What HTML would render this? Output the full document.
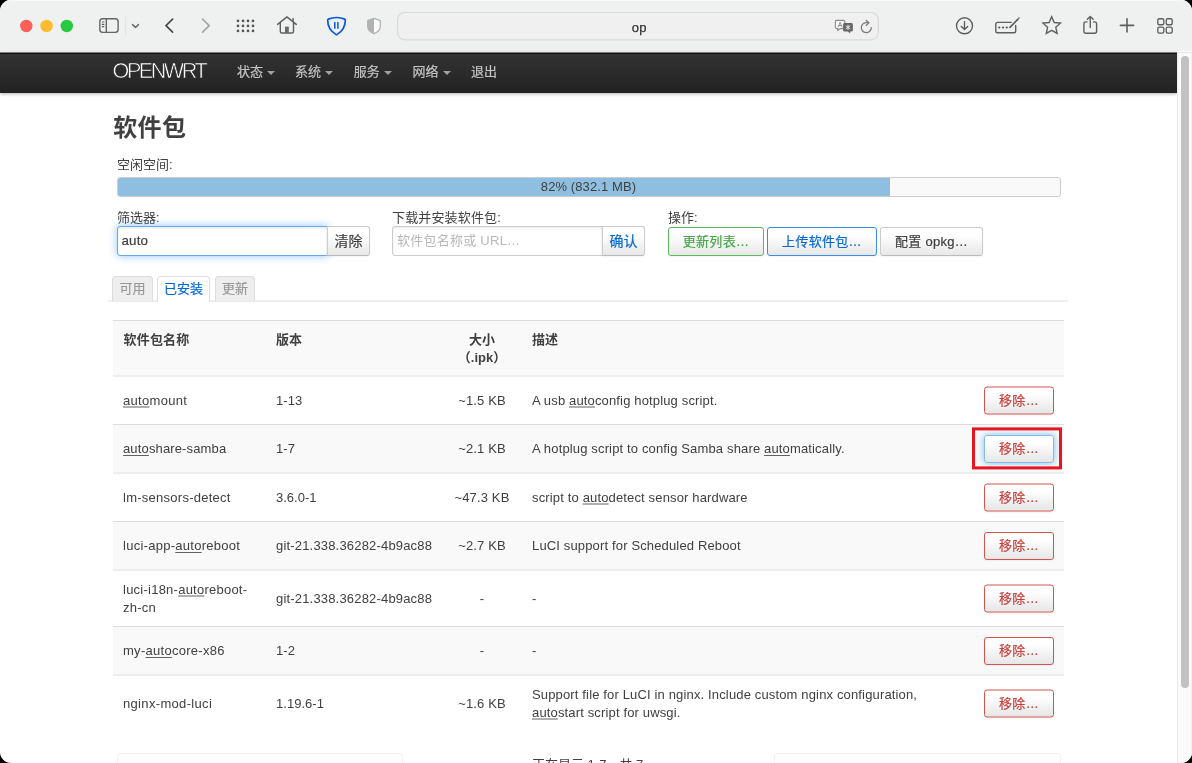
<!DOCTYPE html>
<html lang="zh-CN">
<head>
<meta charset="utf-8">
<title>OpenWrt - 软件包 - LuCI</title>
<style>
*{box-sizing:border-box;margin:0;padding:0}
html,body{width:1192px;height:763px;overflow:hidden;background:#000}
body{font-family:"Liberation Sans","Noto Sans CJK SC",sans-serif;font-size:13px;line-height:18px;color:#404040;position:relative}
#win{will-change:transform;position:absolute;left:0;top:0;width:1192px;height:763px;background:#fff;border-radius:11px;overflow:hidden}
.abs{position:absolute}
/* safari toolbar */
#tb{position:absolute;left:0;top:0;width:1192px;height:52px;background:#eff1f0;border-bottom:1px solid #fafafa}
#tb svg{position:absolute;overflow:visible}
.tl{position:absolute;top:19.8px;width:12.4px;height:12.4px;border-radius:50%}
#url{display:none}
#urltxt{position:absolute;left:398.3px;top:19px;width:482px;text-align:center;font-size:13px;line-height:18px;color:#333;letter-spacing:.4px;-webkit-text-stroke:.25px #333}
/* navbar */
#nav{position:absolute;left:0;top:52px;width:1177px;height:41px;background:linear-gradient(#343434,#222);box-shadow:0 1px 3px rgba(0,0,0,.3)}
#brand{position:absolute;left:112.6px;top:9px;font-size:21.6px;line-height:20px;color:#fff;font-weight:normal;letter-spacing:-2.5px;-webkit-text-stroke:0.6px #2c2c2c}
.mi{position:absolute;top:11px;font-size:13px;line-height:18px;color:#c4c4c4;-webkit-text-stroke:.2px #c4c4c4;white-space:nowrap}
.mi i{display:inline-block;width:0;height:0;border-left:4px solid transparent;border-right:4px solid transparent;border-top:4px solid #a0a0a0;vertical-align:1.3px;margin-left:4px}
/* scrollbar */
#sb{position:absolute;left:1177px;top:52px;width:15px;height:711px;background:#fafafa;border-left:1px solid #e9e9e9;border-top:1px solid #e6e8e6;border-right:1px solid #f0f0f0}
#sbt{position:absolute;left:3px;top:2.5px;width:8px;height:632.4px;border-radius:4px;background:#c2c2c2}
/* content */
h2{position:absolute;left:113.3px;top:113px;letter-spacing:.3px;font-size:24px;line-height:30px;font-weight:bold;color:#404040}
.lbl{position:absolute;font-size:13px;line-height:18px;color:#404040;white-space:nowrap}
#pg{position:absolute;left:117px;top:177px;width:944px;height:20px;border:1px solid #ccc;border-radius:3px;background:#f9f9f9;overflow:hidden}
#pg b{position:absolute;left:0;top:0;height:100%;width:82%;background:#8fbfe0;font-weight:normal}
#pg span{position:absolute;left:-.5px;top:0;width:100%;text-align:center;line-height:18px;font-size:13px;color:#404040;letter-spacing:.1px}
.inp{position:absolute;top:226px;height:30px;border:1px solid #ccc;background:#fff;box-shadow:inset 0 1px 3px rgba(0,0,0,.1);border-radius:3px 0 0 3px;font-size:13px;line-height:28px;padding-left:4px;color:#404040;white-space:nowrap}
.btn{position:absolute;top:226px;height:30px;border:1px solid #ccc;border-bottom-color:#bbb;border-radius:3px;background:linear-gradient(#fff,#fff 25%,#e8e8e8);font-size:13px;letter-spacing:.3px;-webkit-text-stroke:.2px;line-height:28px;text-align:center;color:#404040;white-space:nowrap;box-shadow:inset 0 1px 0 rgba(255,255,255,.2),0 1px 2px rgba(0,0,0,.05)}
.btn.a{top:227px;height:29px;line-height:27px}
.tab{position:absolute;top:276px;height:25px;border:1px solid #ddd;border-bottom:none;border-radius:4px 4px 0 0;background:#eee;color:#999;font-size:13px;line-height:24px;-webkit-text-stroke:.2px;text-align:center}
#tabline{position:absolute;left:108px;top:300px;width:960px;height:1px;background:#ddd;transform:translateY(.6px)}
/* table */
#tblhead{position:absolute;left:113px;top:320px;width:951px;height:56px;background:#f9f9f9;border-top:1px solid #ddd}
.row{position:absolute;left:113px;width:951px;border-top:1px solid #ddd}
.row.h{transform:translateY(.5px)}
.row.odd{background:#fff}
.row.even{background:#f9f9f9}
.c{position:absolute;font-size:13px;line-height:18px;color:#404040;white-space:nowrap}
.c{letter-spacing:.15px}
.c u{text-decoration:underline;text-decoration-thickness:1px;text-decoration-color:#606060;text-underline-offset:2px}
.th{position:absolute;font-size:13px;line-height:18px;font-weight:bold;color:#404040;white-space:nowrap}
.rm.f{border-color:#85b9ec;box-shadow:0 0 7px rgba(82,168,236,.75)}
.hlbox{left:859px;width:90px;height:42px;border:3px solid #e8141f;transform:translateY(.4px)}
.rm{position:absolute;left:871px;width:70px;height:28px;border:1px solid #d25450;border-radius:3px;background:linear-gradient(#fff,#fff 25%,#e6e6e6);color:#c9403c;font-size:13px;letter-spacing:.35px;-webkit-text-stroke:.2px;line-height:26px;text-align:center;box-shadow:0 1px 2px rgba(0,0,0,.05)}
</style>
</head>
<body>
<div id="win">

<div id="tb">
  <div class="abs" style="left:0;top:0;width:100%;height:1px;background:#f7f8f7"></div>
  <div id="url"></div>
  <svg id="tbi" width="1192" height="52" viewBox="0 0 1192 52" style="left:0;top:0" fill="none" stroke="#5e5e5e" stroke-width="1.4" stroke-linecap="round" stroke-linejoin="round">
  <rect x="397.6" y="12.5" width="480.8" height="27.3" rx="7.5" fill="#eff0ef" stroke="#d9d9d9" stroke-width="1.2"/>
  <g stroke="none"><circle cx="26.3" cy="26" r="6.2" fill="#fe5f57"/><circle cx="46.6" cy="26" r="6.2" fill="#febc2e"/><circle cx="66.8" cy="26" r="6.2" fill="#28c840"/></g>
  <!-- sidebar -->
  <rect x="99.8" y="18.8" width="18.3" height="13.6" rx="2.8" stroke-width="1.4" stroke="#666"/>
  <path d="M106.3 18.8V32.4" stroke-linecap="butt" stroke-width="1.4" stroke="#666"/>
  <path d="M102.3 22h1.6M102.3 24.4h1.6M102.3 26.6h1.6" stroke-width="1.1"/>
  <path d="M125.7 17v18" stroke="#dfdfe2" stroke-width="1"/>
  <path d="M132.6 24.6l2.9 2.9l2.9-2.9" stroke="#6a6a6a" stroke-width="1.5"/>
  <!-- back / forward -->
  <path d="M172.6 19.1l-6.6 6.5l6.6 6.5" stroke="#4a4a4a" stroke-width="1.7"/>
  <path d="M202.6 19.1l6.6 6.5l-6.6 6.5" stroke="#a6a6a6" stroke-width="1.7"/>
  <!-- grid -->
  <g fill="#555" stroke="none">
    <circle cx="238" cy="20.9" r="1.35"/><circle cx="243" cy="20.9" r="1.35"/><circle cx="248" cy="20.9" r="1.35"/><circle cx="253" cy="20.9" r="1.35"/>
    <circle cx="238" cy="25.9" r="1.35"/><circle cx="243" cy="25.9" r="1.35"/><circle cx="248" cy="25.9" r="1.35"/><circle cx="253" cy="25.9" r="1.35"/>
    <circle cx="238" cy="30.9" r="1.35"/><circle cx="243" cy="30.9" r="1.35"/><circle cx="248" cy="30.9" r="1.35"/><circle cx="253" cy="30.9" r="1.35"/>
  </g>
  <!-- home -->
  <path d="M277.6 24.4L286.9 16.9L296.3 24.4"/>
  <path d="M280.3 23v8.4q0 1.6 1.6 1.6h10q1.6 0 1.6-1.6V23"/>
  <path d="M293.1 18.4v3.2"/>
  <rect x="285" y="26.6" width="3.8" height="6.4" fill="#6a6a6a" stroke="none"/>
  <!-- blue shield -->
  <path d="M336.5 17.5C339.6 17.5 342.6 18.2 344.6 19.1Q345.3 19.4 345.3 20.2C345.3 26.5 341.8 31.5 337.2 34.4Q336.5 34.8 335.8 34.4C331.2 31.5 327.7 26.5 327.7 20.2Q327.7 19.4 328.4 19.1C330.4 18.2 333.4 17.5 336.5 17.5Z" stroke="#0a58e0" stroke-width="1.7"/>
  <path d="M334.800 22.400v5.800M337.900 22.400v5.800" stroke="#0a58e0" stroke-width="1.5"/>
  <!-- half shield -->
  <path d="M374 18.300l6.300 2.400v5.800c0 3.400 -2.600 5.600 -6.300 7.100c-3.700 -1.500 -6.300 -3.700 -6.300 -7.100v-5.800z" stroke="#b2b2b2" stroke-width="1.300" fill="#fbfbfb"/>
  <path d="M374 18.300v15.300c-3.700 -1.500 -6.300 -3.700 -6.300 -7.100v-5.800z" fill="#b2b2b2" stroke="none"/>
  <!-- translate -->
  <path d="M836.800 20.400h6.600q1.500 0 1.500 1.500v5.200q0 1.500 -1.500 1.500h-3.400l-2.200 2v-2h-1q-1.500 0 -1.500 -1.500v-5.200q0 -1.500 1.500 -1.500z" stroke="#8a8a8a" stroke-width="1.100" fill="#f6f6f6"/>
  <path d="M838.300 26.900l1.800 -4.600l1.800 4.600M838.900 25.500h2.400" stroke="#8a8a8a" stroke-width="0.900"/>
  <path d="M844.600 23.100h6.800q1.500 0 1.500 1.500v5.300q0 1.500 -1.500 1.500h-1.200v2l-2.400 -2h-3.200q-1.500 0 -1.500 -1.500v-5.300q0 -1.500 1.500 -1.500z" fill="#666" stroke="none"/>
  <path d="M848 25.200v4.400M846 26l4 2.800M850 26l-4 2.800" stroke="#f0f0f0" stroke-width="0.900"/>
  <!-- reload -->
  <path d="M871.300 27.600a5 5 0 1 1 -4 -4.900" stroke="#7c7c7c" stroke-width="1.300"/>
  <path d="M866.300 20.400l2.600 2.300l-2.600 2.500" stroke="#7c7c7c" stroke-width="1.300"/>
  <!-- download -->
  <circle cx="964.500" cy="25.800" r="8" />
  <path d="M964.500 21.800v7.600M961.300 26.400l3.200 3.200l3.200 -3.200"/>
  <!-- password edit -->
  <path d="M1011.300 22.400h-13.700q-1.800 0 -1.800 1.800v6.700q0 1.800 1.800 1.800h16.300q1.800 0 1.800 -1.800v-5.400"/>
  <g fill="#555" stroke="none"><circle cx="999.300" cy="27.500" r="1.100"/><circle cx="1003" cy="27.500" r="1.100"/><circle cx="1006.700" cy="27.500" r="1.100"/></g>
  <path d="M1010 27.400l8 -8.300" stroke-width="1.700"/>
  <circle cx="1019" cy="18" r="0.800" fill="#555" stroke="none"/>
  <!-- star -->
  <path d="M1051.700 16.800l2.550 5.700l6.200 .65l-4.650 4.200l1.300 6.100l-5.400 -3.100l-5.400 3.100l1.300 -6.100l-4.650 -4.200l6.200 -.65z" stroke-width="1.400" stroke-linejoin="miter"/>
  <!-- share -->
  <path d="M1087 21.900h-1.100q-2 0 -2 2v7.300q0 2 2 2h8.700q2 0 2 -2v-7.300q0 -2 -2 -2h-1.100"/>
  <path d="M1090.250 27.600V16.500M1087.300 19.300l2.950 -2.900l2.950 2.900"/>
  <!-- plus -->
  <path d="M1120.400 25.400h13.200M1127 18.900v13.100" stroke-width="1.600"/>
  <!-- tabs -->
  <rect x="1157.8" y="18.7" width="6" height="6" rx="1.5" stroke-width="1.35"/>
  <rect x="1166.2" y="18.7" width="6" height="6" rx="1.5" stroke-width="1.35"/>
  <rect x="1157.8" y="27.1" width="6" height="6" rx="1.5" stroke-width="1.35"/>
  <rect x="1166.2" y="27.1" width="6" height="6" rx="1.5" stroke-width="1.35"/>
  
</svg>
  <div id="urltxt">op</div>
</div>

<div id="nav">
  <div class="abs" style="left:0;top:0;width:100%;height:1px;background:#7d7d7d"></div><div class="abs" style="left:0;top:1px;width:100%;height:1px;background:#121212"></div>
  <div id="brand">OPENWRT</div>
  <div class="mi" style="left:237px">状态<i></i></div>
  <div class="mi" style="left:295px">系统<i></i></div>
  <div class="mi" style="left:353.7px">服务<i></i></div>
  <div class="mi" style="left:412.5px">网络<i></i></div>
  <div class="mi" style="left:471px">退出</div>
</div>

<div id="sb"><div id="sbt"></div></div>

<h2>软件包</h2>
<div class="lbl" style="left:117px;top:156px">空闲空间:</div>
<div id="pg"><b></b><span>82% (832.1 MB)</span></div>

<div class="lbl" style="left:117px;top:209px">筛选器:</div>
<div class="inp" id="f1" style="left:117px;width:211px;border-color:#66abee;box-shadow:inset 0 1px 3px rgba(0,0,0,.1),0 0 8px rgba(82,168,236,.65);font-size:13.4px;letter-spacing:.2px;padding-left:3.4px;-webkit-text-stroke:.2px #404040">auto</div>
<div class="btn" style="left:327px;width:43px;border-radius:0 3px 3px 0;font-size:14px;letter-spacing:0">清除</div>

<div class="lbl" style="left:392px;top:209px;letter-spacing:.15px">下载并安装软件包:</div>
<div class="inp" style="left:392px;width:211px;color:#b8b8b8;letter-spacing:.25px">软件包名称或 URL…</div>
<div class="btn" style="left:602px;width:43px;border-radius:0 3px 3px 0;color:#0069d6;font-size:14px;letter-spacing:0">确认</div>

<div class="lbl" style="left:668px;top:209px">操作:</div>
<div class="btn a" style="left:668px;width:96px;border-color:#5cb85c;color:#46a546">更新列表…</div>
<div class="btn a" style="left:767px;width:110px;border-color:#3c8ce0;color:#0069d6">上传软件包…</div>
<div class="btn a" style="left:880px;width:103px">配置 opkg…</div>

<div id="tabline"></div>
<div class="tab" style="left:112px;width:41px">可用</div>
<div class="tab" style="left:157px;width:53px;background:#fff;color:#0069d6">已安装</div>
<div class="abs" style="left:158px;top:300px;width:51px;height:2px;background:#fff"></div>
<div class="tab" style="left:215px;width:40px">更新</div>

<!--ROWS-->
<div id="tblhead">
  <div class="th" style="left:10.5px;top:10px;letter-spacing:.2px">软件包名称</div>
  <div class="th" style="left:163px;top:10px">版本</div>
  <div class="th" style="left:329px;top:10px;width:80px;text-align:center">大小<br>（.ipk）</div>
  <div class="th" style="left:419px;top:10px">描述</div>
</div>
<div class="row odd h" style="top:375px;height:48.5px">
  <div class="c" style="left:10px;top:14.75px;letter-spacing:0.3px"><u>auto</u>mount</div>
  <div class="c" style="left:163px;top:14.75px;letter-spacing:0.05px">1-13</div>
  <div class="c" style="left:329px;top:14.75px;width:80px;text-align:center">~1.5 KB</div>
  <div class="c" style="left:419px;top:14.75px">A usb <u>auto</u>config hotplug script.</div>
  <div class="rm" style="top:9.75px">移除…</div>
</div>
<div class="row even" style="top:424px;height:48.5px">
  <div class="c" style="left:10px;top:14.75px;letter-spacing:0.14px"><u>auto</u>share-samba</div>
  <div class="c" style="left:163px;top:14.75px;letter-spacing:0.05px">1-7</div>
  <div class="c" style="left:329px;top:14.75px;width:80px;text-align:center">~2.1 KB</div>
  <div class="c" style="left:419px;top:14.75px">A hotplug script to config Samba share <u>auto</u>matically.</div>
  <div class="rm f" style="top:9.75px">移除…</div>
  <div class="abs hlbox" style="top:2px"></div>
</div>
<div class="row odd h" style="top:472px;height:48.5px">
  <div class="c" style="left:10px;top:14.75px;letter-spacing:0.26px">lm-sensors-detect</div>
  <div class="c" style="left:163px;top:14.75px;letter-spacing:0px">3.6.0-1</div>
  <div class="c" style="left:329px;top:14.75px;width:80px;text-align:center">~47.3 KB</div>
  <div class="c" style="left:419px;top:14.75px">script to <u>auto</u>detect sensor hardware</div>
  <div class="rm" style="top:9.75px">移除…</div>
</div>
<div class="row even" style="top:521px;height:48.5px">
  <div class="c" style="left:10px;top:14.75px;letter-spacing:0.27px">luci-app-<u>auto</u>reboot</div>
  <div class="c" style="left:163px;top:14.75px;letter-spacing:0.18px">git-21.338.36282-4b9ac88</div>
  <div class="c" style="left:329px;top:14.75px;width:80px;text-align:center">~2.7 KB</div>
  <div class="c" style="left:419px;top:14.75px">LuCI support for Scheduled Reboot</div>
  <div class="rm" style="top:9.75px">移除…</div>
</div>
<div class="row odd h" style="top:569px;height:56.5px">
  <div class="c" style="left:10px;top:9.75px;letter-spacing:0.24px">luci-i18n-<u>auto</u>reboot-<br>zh-cn</div>
  <div class="c" style="left:163px;top:18.75px;letter-spacing:0.18px">git-21.338.36282-4b9ac88</div>
  <div class="c" style="left:329px;top:18.75px;width:80px;text-align:center">-</div>
  <div class="c" style="left:419px;top:18.75px">-</div>
  <div class="rm" style="top:13.75px">移除…</div>
</div>
<div class="row even" style="top:626px;height:48.5px">
  <div class="c" style="left:10px;top:15.25px;letter-spacing:0.28px">my-<u>auto</u>core-x86</div>
  <div class="c" style="left:163px;top:15.25px;letter-spacing:0.1px">1-2</div>
  <div class="c" style="left:329px;top:15.25px;width:80px;text-align:center">-</div>
  <div class="c" style="left:419px;top:15.25px">-</div>
  <div class="rm" style="top:9.75px">移除…</div>
</div>
<div class="row odd h" style="top:674px;height:56.5px">
  <div class="c" style="left:10px;top:19.25px;letter-spacing:0.33px">nginx-mod-luci</div>
  <div class="c" style="left:163px;top:19.25px;letter-spacing:0.03px">1.19.6-1</div>
  <div class="c" style="left:329px;top:19.25px;width:80px;text-align:center">~1.6 KB</div>
  <div class="c" style="left:419px;top:10.25px">Support file for LuCI in nginx. Include custom nginx configuration,<br><u>auto</u>start script for uwsgi.</div>
  <div class="rm" style="top:13.75px">移除…</div>
</div>
<!--/ROWS-->

<div class="abs" style="left:117px;top:753px;width:286px;height:30px;border:1px solid #f1f1f1;border-radius:3px;background:#fefefe"></div>
<div class="lbl" style="left:532px;top:756px">正在显示 1-7，共 7</div>
<div class="abs" style="left:774px;top:753px;width:287px;height:30px;border:1px solid #f1f1f1;border-radius:3px;background:#fefefe"></div>

</div>
</body>
</html>
